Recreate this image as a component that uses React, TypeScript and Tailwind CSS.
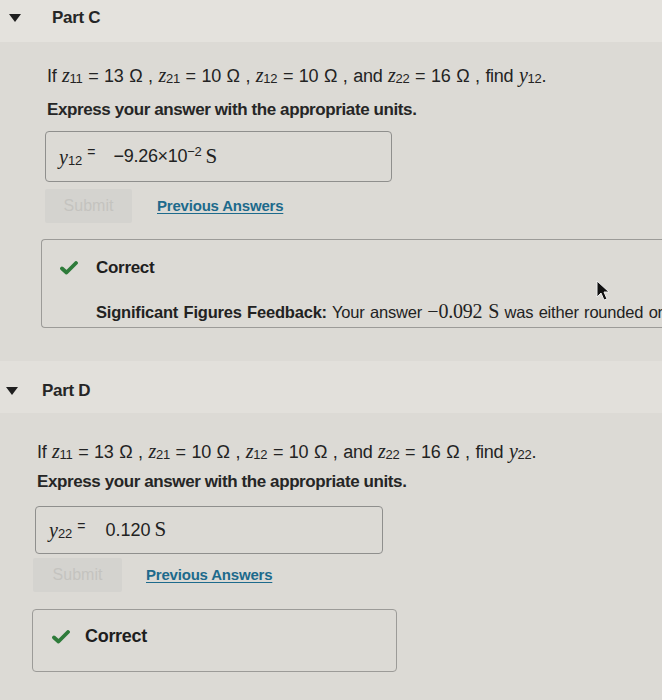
import React from "react";

const sans = { fontFamily: '"Liberation Sans", Arial, sans-serif' };
const serif = { fontFamily: '"Liberation Serif", "Times New Roman", serif' };

function Tri() {
  return (
    <svg width="12" height="8" viewBox="0 0 12 8" className="shrink-0">
      <path d="M0 0 L12 0 L6 8 Z" fill="#1f1f1f" />
    </svg>
  );
}

function Check() {
  return (
    <svg width="18" height="14" viewBox="0 0 18 14" className="shrink-0">
      <path d="M2 7.5 L6.5 11.5 L16 2" fill="none" stroke="#2e7b3a" strokeWidth="3.8" strokeLinecap="round" strokeLinejoin="round" />
    </svg>
  );
}

function V({ v, s }: { v: string; s: string }) {
  return (
    <span className="whitespace-nowrap">
      <span className="italic text-[20px]" style={serif}>{v}</span>
      <sub className="text-[13px] relative top-[1px]">{s}</sub>
    </span>
  );
}

function Problem({ find }: { find: string }) {
  return (
    <p className="text-[18px] leading-[24px] text-[#232323] tracking-[-0.3px] [word-spacing:1px] whitespace-nowrap">
      If <V v="z" s="11" /> = 13 Ω , <V v="z" s="21" /> = 10 Ω , <V v="z" s="12" /> = 10 Ω , and <V v="z" s="22" /> = 16 Ω , find <V v="y" s={find} />.
    </p>
  );
}

export default function App() {
  return (
    <div className="relative w-[662px] h-[700px] overflow-hidden bg-[#dcdad5] text-[#222]" style={sans}>
      {/* Part C */}
      <div className="h-[42px] bg-[#e4e2dd] flex items-start pt-[8px] pl-[9px]">
        <div className="flex items-center h-[20px] gap-[31px]">
          <Tri />
          <span className="text-[17px] leading-[20px] font-bold text-[#262626] tracking-[-0.3px]">Part C</span>
        </div>
      </div>
      <div className="pl-[47px] pt-[21px]">
        <Problem find="12" />
        <p className="mt-[11px] text-[17px] leading-[22px] font-bold text-[#262626] tracking-[-0.4px]">Express your answer with the appropriate units.</p>
        <div className="mt-[10px] -ml-[2px] w-[347px] h-[51px] rounded-[4px] border border-[#8f8f8d] flex items-center pl-[13px] text-[18px]">
          <V v="y" s="12" />
          <span className="ml-[5px] -mt-[8px] text-[14px]">=</span>
          <span className="ml-[18px] tracking-[-0.3px]">−9.26×10<sup className="text-[13px]">−2</sup></span>
          <span className="ml-[4px] text-[21px]" style={serif}>S</span>
        </div>
        <div className="mt-[7px] -ml-[2px] flex items-center">
          <div className="w-[87px] h-[34px] bg-[#d4d3cf] rounded-[2px] flex items-center justify-center text-[16px] text-[#c4c3bf]">Submit</div>
          <a className="ml-[25px] text-[15px] font-bold text-[#1d6a8c] underline underline-offset-2 tracking-[-0.2px]">Previous Answers</a>
        </div>
        <div className="mt-[16px] -ml-[6px] w-[640px] h-[89px] rounded-l-[4px] border border-r-0 border-[#9c9b98] pl-[18px] pt-[17px] overflow-hidden">
          <div className="flex items-center h-[22px]">
            <Check />
            <span className="ml-[18px] text-[17px] leading-[22px] font-bold text-[#1e1e1e] tracking-[-0.3px]">Correct</span>
          </div>
          <p className="mt-[21px] ml-[36px] text-[16.5px] leading-[22px] whitespace-nowrap tracking-[-0.2px] [word-spacing:1px]">
            <b>Significant Figures Feedback:</b> Your answer <span className="text-[20px]" style={serif}>−0.092 S</span> was either rounded or truncated.
          </p>
        </div>
      </div>

      {/* Part D */}
      <div className="mt-[33px] h-[52px] bg-[#e2e0db] flex items-start pt-[20px] pl-[6px]">
        <div className="flex items-center h-[20px] gap-[24px]">
          <Tri />
          <span className="text-[17px] leading-[20px] font-bold text-[#262626] tracking-[-0.3px]">Part D</span>
        </div>
      </div>
      <div className="pl-[37px] pt-[26px]">
        <Problem find="22" />
        <p className="mt-[7px] text-[17px] leading-[22px] font-bold text-[#262626] tracking-[-0.4px]">Express your answer with the appropriate units.</p>
        <div className="mt-[13px] -ml-[2px] w-[348px] h-[48px] rounded-[4px] border border-[#8f8f8d] flex items-center pl-[13px] text-[18px]">
          <V v="y" s="22" />
          <span className="ml-[5px] -mt-[8px] text-[14px]">=</span>
          <span className="ml-[20px]">0.120</span>
          <span className="ml-[4px] text-[21px]" style={serif}>S</span>
        </div>
        <div className="mt-[4px] -ml-[4px] flex items-center">
          <div className="w-[89px] h-[34px] bg-[#d4d3cf] rounded-[2px] flex items-center justify-center text-[16px] text-[#c4c3bf]">Submit</div>
          <a className="ml-[24px] text-[15px] font-bold text-[#1d6a8c] underline underline-offset-2 tracking-[-0.2px]">Previous Answers</a>
        </div>
        <div className="mt-[17px] -ml-[5px] w-[365px] h-[63px] rounded-[4px] border border-[#9c9b98] pl-[19px] pb-[8px] flex items-center">
          <Check />
          <span className="ml-[15px] text-[18px] font-bold text-[#1e1e1e] tracking-[-0.3px]">Correct</span>
        </div>
      </div>

      {/* mouse cursor */}
      <svg className="absolute left-[595px] top-[280px]" width="16" height="22" viewBox="0 0 16 22">
        <path d="M2 1 L2 17 L6 13 L9 20 L12 19 L9 12 L14 12 Z" fill="#111" stroke="#eee" strokeWidth="1" />
      </svg>
    </div>
  );
}
